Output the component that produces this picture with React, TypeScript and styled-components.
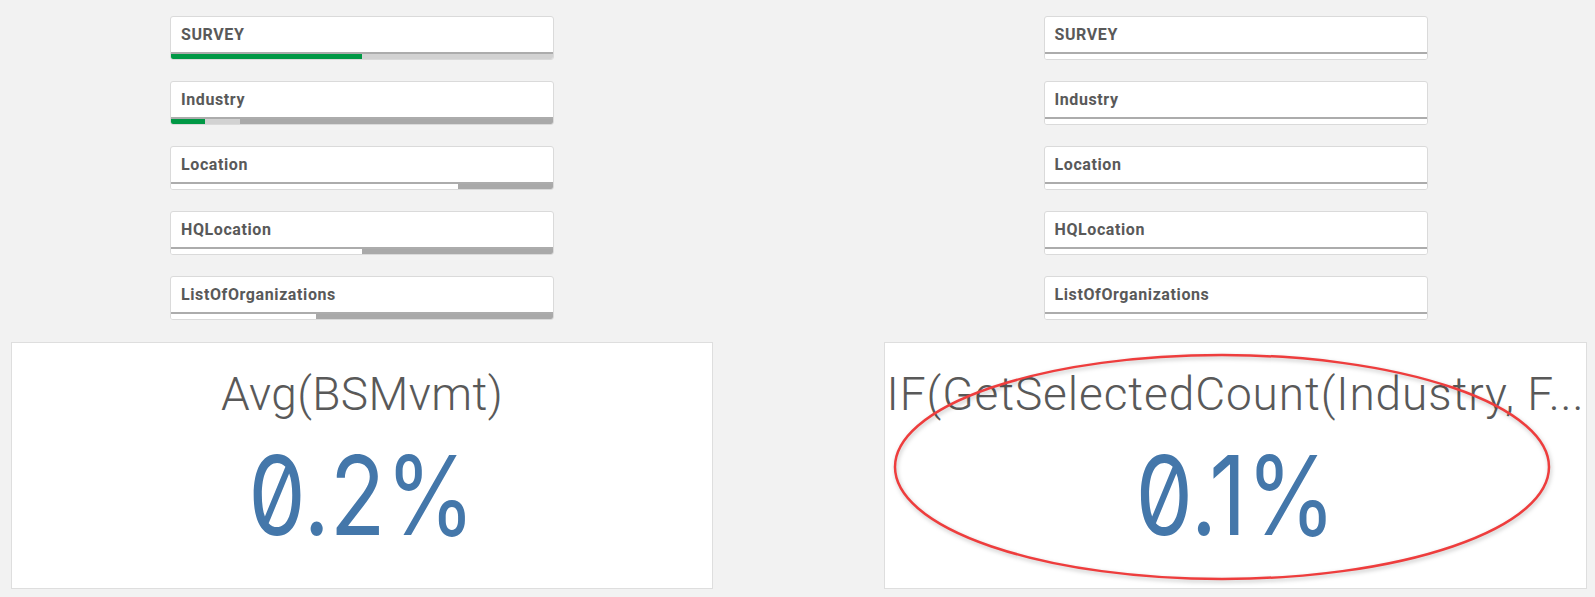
import { FC } from 'react';
import styled, { createGlobalStyle } from 'styled-components';

const GlobalStyle = createGlobalStyle`
    html, body {
        margin: 0;
        padding: 0;
        background: #f2f2f2;
    }
    body {
        font-family: Roboto, "Liberation Sans", Arial, sans-serif;
    }
`

type Segment = {
    state: 'selected' | 'optional' | 'alternative' | 'excluded';
    size: number;
}

type FilterPaneProps = {
    title: string;
    segments: Segment[];
}

const segmentColors: Record<Segment['state'], string> = {
    selected: '#009845',
    optional: '#ffffff',
    alternative: '#d2d2d2',
    excluded: '#a9a9a9',
}

const StyledSheet = styled.div`
    display: grid;
    grid-template-columns: 702px 703px;
    column-gap: 171px;
    padding: 16px 0 0 11px;
`

const StyledColumn = styled.div`
    display: flex;
    flex-direction: column;
    align-items: center;
`

const StyledPaneList = styled.div`
    display: flex;
    flex-direction: column;
    gap: 21px;
    width: 384px;
`

const StyledPane = styled.div`
    height: 44px;
    box-sizing: border-box;
    background: #ffffff;
    border: 1px solid #dadada;
    border-radius: 3px;
    overflow: hidden;
    display: flex;
    flex-direction: column;
`

const StyledPaneTitle = styled.div`
    height: 35px;
    padding-left: 10px;
    display: flex;
    align-items: center;
    font-family: Roboto, "Liberation Sans", sans-serif;
    font-weight: 700;
    font-size: 16px;
    letter-spacing: 0.6px;
    color: #595959;
`

const StyledBar = styled.div`
    height: 5px;
    border-top: 2px solid #acacac;
    display: flex;
`

const StyledSegment = styled.div<{ $state: Segment['state'] }>`
    height: 100%;
    background: ${props => segmentColors[props.$state]};
`

const StyledKpi = styled.div`
    position: relative;
    width: 100%;
    height: 247px;
    margin-top: 22px;
    box-sizing: border-box;
    background: #ffffff;
    border: 1px solid #dedede;
    display: flex;
    flex-direction: column;
    align-items: center;
    padding-top: 24px;
`

const StyledKpiTitle = styled.div<{ $tracking?: number }>`
    max-width: 100%;
    font-family: Roboto, "Liberation Sans", sans-serif;
    font-weight: 300;
    font-size: 46px;
    line-height: 55px;
    letter-spacing: ${props => props.$tracking ?? 0.4}px;
    color: #595959;
    text-align: center;
    white-space: nowrap;
    overflow: hidden;
`

const StyledKpiValue = styled.div`
    margin-top: 18px;
    font-family: Inter, "DejaVu Sans", sans-serif;
    font-weight: 400;
    font-size: 110px;
    line-height: 110px;
    font-variant-numeric: slashed-zero;
    color: #4477aa;
    transform: scaleX(0.83);
`

const StyledEllipse = styled.svg`
    position: absolute;
    left: 9px;
    top: 11px;
    width: 656px;
    height: 226px;
    overflow: visible;
    pointer-events: none;
    filter: drop-shadow(1px 2px 2px rgba(0,0,0,.25));
`

const FilterPane:FC<FilterPaneProps> = ({ title, segments }) => {
    return (
        <StyledPane>
            <StyledPaneTitle>{title}</StyledPaneTitle>
            <StyledBar>
                {segments.map((s, i) => (
                    <StyledSegment key={i} $state={s.state} style={{ flex: s.size }} />
                ))}
            </StyledBar>
        </StyledPane>
    )
}

const leftPanes: FilterPaneProps[] = [
    { title: 'SURVEY', segments: [{ state: 'selected', size: 50 }, { state: 'alternative', size: 50 }] },
    { title: 'Industry', segments: [{ state: 'selected', size: 9 }, { state: 'alternative', size: 9 }, { state: 'excluded', size: 82 }] },
    { title: 'Location', segments: [{ state: 'optional', size: 75 }, { state: 'excluded', size: 25 }] },
    { title: 'HQLocation', segments: [{ state: 'optional', size: 50 }, { state: 'excluded', size: 50 }] },
    { title: 'ListOfOrganizations', segments: [{ state: 'optional', size: 38 }, { state: 'excluded', size: 62 }] },
]

const rightPanes: FilterPaneProps[] = leftPanes.map(p => ({
    title: p.title,
    segments: [{ state: 'optional', size: 100 }],
}))

const App:FC = () => {
    return (
        <>
            <GlobalStyle />
            <StyledSheet>
                <StyledColumn>
                    <StyledPaneList>
                        {leftPanes.map(p => <FilterPane key={p.title} {...p} />)}
                    </StyledPaneList>
                    <StyledKpi>
                        <StyledKpiTitle>Avg(BSMvmt)</StyledKpiTitle>
                        <StyledKpiValue>0.2%</StyledKpiValue>
                    </StyledKpi>
                </StyledColumn>
                <StyledColumn>
                    <StyledPaneList>
                        {rightPanes.map(p => <FilterPane key={p.title} {...p} />)}
                    </StyledPaneList>
                    <StyledKpi>
                        <StyledKpiTitle $tracking={0.9}>IF(GetSelectedCount(Industry, F...</StyledKpiTitle>
                        <StyledKpiValue>0.1%</StyledKpiValue>
                        <StyledEllipse viewBox="0 0 656 226">
                            <ellipse cx="328" cy="113" rx="327" ry="112" fill="none" stroke="#ee3d3d" strokeWidth="2.5" />
                        </StyledEllipse>
                    </StyledKpi>
                </StyledColumn>
            </StyledSheet>
        </>
    )
}

export default App;
